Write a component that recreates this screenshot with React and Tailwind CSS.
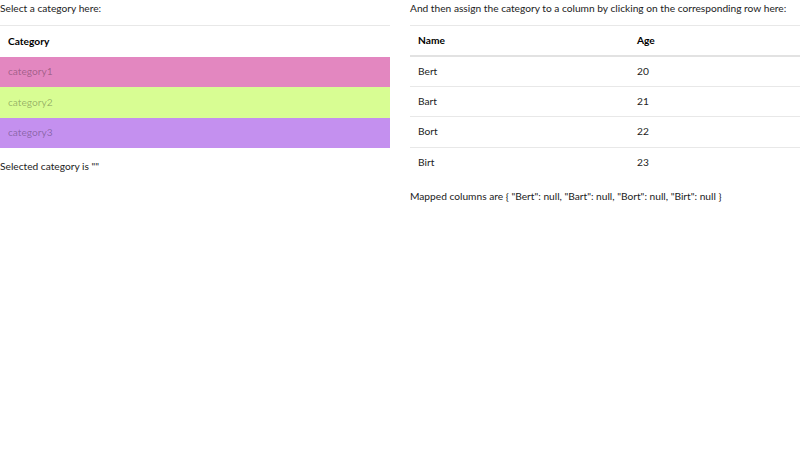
import React, { useState } from 'react';

const categories = [
  { name: 'category1', bg: 'bg-[#e387c0]' },
  { name: 'category2', bg: 'bg-[#d8fd93]' },
  { name: 'category3', bg: 'bg-[#c490ef]' },
];

const people = [
  { name: 'Bert', age: 20 },
  { name: 'Bart', age: 21 },
  { name: 'Bort', age: 22 },
  { name: 'Birt', age: 23 },
];

const App = () => {
  const [selected, setSelected] = useState('');
  const [mapping, setMapping] = useState({ Bert: null, Bart: null, Bort: null, Birt: null });

  const mappedText = '{ ' + Object.entries(mapping).map(([k, v]) => `"${k}": ${v === null ? 'null' : `"${v}"`}`).join(', ') + ' }';

  return (
    <div className="grid grid-cols-[390px_390px] gap-[20px] bg-white text-[10.2px] leading-[15px] text-[#222]" style={{ fontFamily: 'Lato, "Liberation Sans", sans-serif' }}>
      {/* Left: categories */}
      <div>
        <div className="h-[25px] pt-[1px] whitespace-nowrap">Select a category here:</div>
        <table className="w-full border-collapse">
          <thead>
            <tr className="border-t border-[#e8e8e8]">
              <th className="h-[31px] px-[8px] text-left font-bold text-black">Category</th>
            </tr>
          </thead>
          <tbody>
            {categories.map(c => (
              <tr key={c.name} className={`${c.bg} cursor-pointer`} onClick={() => setSelected(c.name)}>
                <td className="h-[30.5px] px-[8px] text-black/30">{c.name}</td>
              </tr>
            ))}
          </tbody>
        </table>
        <div className="mt-[11px] whitespace-nowrap">Selected category is "{selected}"</div>
      </div>

      {/* Right: columns */}
      <div>
        <div className="h-[25px] pt-[1px] whitespace-nowrap">And then assign the category to a column by clicking on the corresponding row here:</div>
        <table className="w-full border-collapse">
          <thead>
            <tr className="border-t border-[#e8e8e8] border-b-2 border-b-[#e2e2e2]">
              <th className="h-[30px] w-[219px] px-[8px] text-left font-bold text-black">Name</th>
              <th className="h-[30px] px-[8px] text-left font-bold text-black">Age</th>
            </tr>
          </thead>
          <tbody>
            {people.map((p, i) => (
              <tr
                key={p.name}
                className={`cursor-pointer ${i < people.length - 1 ? 'border-b border-[#e8e8e8]' : ''}`}
                onClick={() => selected && setMapping(m => ({ ...m, [p.name]: selected }))}
              >
                <td className="h-[30.5px] px-[8px]">{p.name}</td>
                <td className="h-[30.5px] px-[8px]">{p.age}</td>
              </tr>
            ))}
          </tbody>
        </table>
        <div className="mt-[11px] whitespace-nowrap">Mapped columns are {mappedText}</div>
      </div>
    </div>
  );
};

export default App;
